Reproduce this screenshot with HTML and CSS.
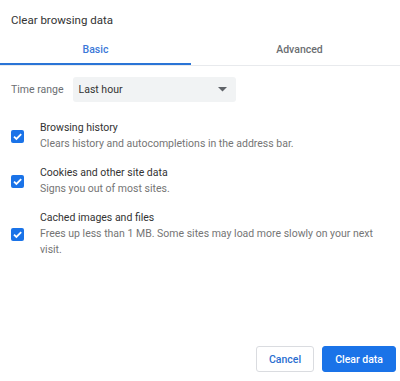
FILE: index.html
```html
<!DOCTYPE html>
<html>
<head>
<meta charset="utf-8">
<link rel="stylesheet" href="styles.css">
</head>
<body>
<div class="dialog">
  <div class="title">Clear browsing data</div>
  <div class="tabs">
    <div class="tab active">Basic</div>
    <div class="tab second">Advanced</div>
  </div>
  <div class="content">
    <div class="range">
      <span class="range-label">Time range</span>
      <div class="select">
        <span>Last hour</span>
        <svg class="arrow" width="9" height="5" viewBox="0 0 9 5"><path d="M0 0h9L4.5 4.5z" fill="#5f6368"/></svg>
      </div>
    </div>
    <div class="item">
      <div class="box"><svg width="13" height="13" viewBox="0 0 13 13"><path d="M3 6.6l2.4 2.4L10.2 4.2" fill="none" stroke="#fff" stroke-width="1.8"/></svg></div>
      <div class="texts">
        <div class="name">Browsing history</div>
        <div class="desc">Clears history and autocompletions in the address bar.</div>
      </div>
    </div>
    <div class="item">
      <div class="box"><svg width="13" height="13" viewBox="0 0 13 13"><path d="M3 6.6l2.4 2.4L10.2 4.2" fill="none" stroke="#fff" stroke-width="1.8"/></svg></div>
      <div class="texts">
        <div class="name">Cookies and other site data</div>
        <div class="desc">Signs you out of most sites.</div>
      </div>
    </div>
    <div class="item">
      <div class="box"><svg width="13" height="13" viewBox="0 0 13 13"><path d="M3 6.6l2.4 2.4L10.2 4.2" fill="none" stroke="#fff" stroke-width="1.8"/></svg></div>
      <div class="texts">
        <div class="name">Cached images and files</div>
        <div class="desc">Frees up less than 1 MB. Some sites may load more slowly on your next visit.</div>
      </div>
    </div>
  </div>
  <div class="buttons">
    <button class="btn cancel">Cancel</button>
    <button class="btn primary">Clear data</button>
  </div>
</div>
</body>
</html>
```
FILE: styles.css
```css
html, body {
  margin: 0;
  padding: 0;
  background: #fff;
}
body {
  font-family: Roboto, "Liberation Sans", sans-serif;
  color: #333;
}
.dialog {
  width: 400px;
  height: 381px;
  display: flex;
  flex-direction: column;
}
.title {
  padding: 12px 11px 0;
  height: 26px;
  font-size: 11.5px;
  line-height: 16px;
  color: #333;
}
.tabs {
  display: flex;
  border-bottom: 1px solid #e8eaed;
  height: 27px;
}
.tab {
  flex: 1;
  text-align: center;
  font-size: 10.5px;
  font-weight: 500;
  color: #6b6e72;
  line-height: 23px;
  box-sizing: border-box;
}
.tab.second {
  padding-left: 8px;
}
.tab.active {
  flex: none;
  width: 191px;
  color: #3c78d8;
  border-bottom: 2px solid #2a74d6;
}
.content {
  flex: 1;
  padding: 11px 11px 0;
}
.range {
  display: flex;
  align-items: center;
  gap: 9px;
  font-size: 10.5px;
  margin-bottom: 18px;
}
.range-label {
  color: #6b6e72;
}
.select {
  width: 163px;
  height: 25px;
  box-sizing: border-box;
  background: #f1f3f4;
  border-radius: 3px;
  display: flex;
  align-items: center;
  justify-content: space-between;
  padding: 0 9px 0 6px;
  color: #333;
}
.item {
  display: flex;
  align-items: center;
  gap: 16px;
}
.item + .item {
  margin-top: 13px;
}
.box {
  width: 13px;
  height: 13px;
  background: #1a73e8;
  border-radius: 2px;
  flex: none;
}
.box svg {
  display: block;
}
.texts {
  font-size: 10.5px;
  line-height: 16px;
}
.name {
  color: #333;
}
.desc {
  color: #757575;
}
.buttons {
  display: flex;
  justify-content: flex-end;
  gap: 8px;
  padding: 0 4px 9px 0;
}
.btn {
  font-family: Roboto, "Liberation Sans", sans-serif;
  font-size: 10.5px;
  font-weight: 500;
  height: 26px;
  border-radius: 3px;
  padding: 0 12px;
  cursor: pointer;
}
.cancel {
  background: #fff;
  border: 1px solid #dadce0;
  color: #2a6fd0;
}
.primary {
  background: #1a73e8;
  border: 1px solid #1a73e8;
  color: #fff;
}
```
